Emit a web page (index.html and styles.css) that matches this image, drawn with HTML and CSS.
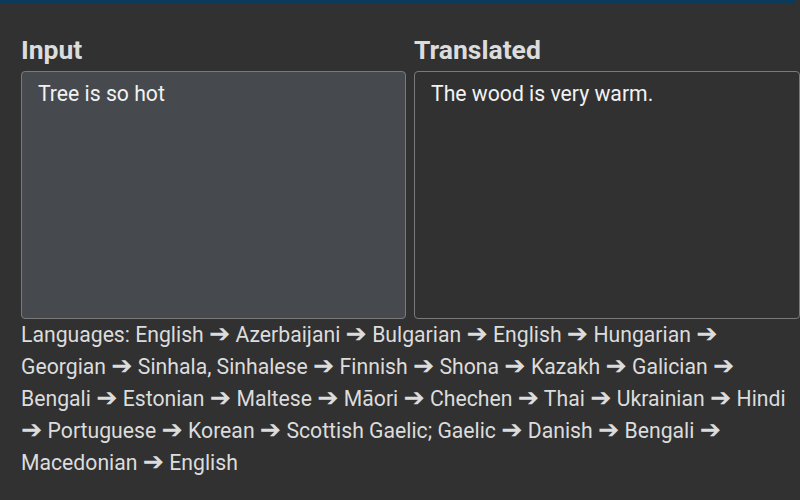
FILE: index.html
```
<!DOCTYPE html>
<html>
<head>
    <title>Translate</title>
    <link rel="stylesheet" href="styles.css">
</head>
<body>

    <div class="top-bar"></div>

    <div class="main">
        <div class="columns">
            <div class="column">
                <h2 class="label">Input</h2>
                <textarea class="box input-box">Tree is so hot</textarea>
            </div>
            <div class="column">
                <h2 class="label">Translated</h2>
                <textarea class="box output-box" readonly>The wood is very warm.</textarea>
            </div>
        </div>

        <p class="languages">Languages: English <span class="arrow">➔</span> Azerbaijani <span class="arrow">➔</span> Bulgarian <span class="arrow">➔</span> English <span class="arrow">➔</span> Hungarian <span class="arrow">➔</span> Georgian <span class="arrow">➔</span> Sinhala, Sinhalese <span class="arrow">➔</span> Finnish <span class="arrow">➔</span> Shona <span class="arrow">➔</span> Kazakh <span class="arrow">➔</span> Galician <span class="arrow">➔</span> Bengali <span class="arrow">➔</span> Estonian <span class="arrow">➔</span> Maltese <span class="arrow">➔</span> Māori <span class="arrow">➔</span> Chechen <span class="arrow">➔</span> Thai <span class="arrow">➔</span> Ukrainian <span class="arrow">➔</span> Hindi <span class="arrow">➔</span> Portuguese <span class="arrow">➔</span> Korean <span class="arrow">➔</span> Scottish Gaelic; Gaelic <span class="arrow">➔</span> Danish <span class="arrow">➔</span> Bengali <span class="arrow">➔</span> Macedonian <span class="arrow">➔</span> English</p>
    </div>

</body>
</html>
```

FILE: styles.css
```
body {
    font-family: Roboto, "Noto Sans", sans-serif;
    margin: 0;
    padding: 0;
    background-color: #313131;
    color: #dcdcdc;
    overflow: hidden;
    height: 100vh;
}

.top-bar {
    height: 4px;
    width: 795px;
    background-color: #0b3a5b;
}

.main {
    padding-left: 21px;
    width: 779px;
}

.columns {
    display: grid;
    grid-template-columns: 385px 386px;
    column-gap: 8px;
}

.label {
    font-size: 26.5px;
    font-weight: bold;
    margin: 0;
    padding-top: 30px;
    line-height: 32px;
    margin-bottom: 5px;
    color: #dcdcdc;
}

.box {
    display: block;
    box-sizing: border-box;
    width: 100%;
    height: 248px;
    margin: 0;
    padding: 9px 16px;
    border: 1px solid #7a7a7a;
    border-radius: 4px;
    font-family: Roboto, "Noto Sans", sans-serif;
    font-size: 21.2px;
    line-height: 26px;
    color: #f2f2f2;
    resize: none;
    outline: none;
}

.input-box {
    background-color: #464a4e;
}

.output-box {
    background-color: #313131;
}

.languages {
    margin: 0;
    font-size: 21.2px;
    line-height: 32px;
    color: #dcdcdc;
}

.arrow {
    font-family: "DejaVu Sans", sans-serif;
    font-size: 1.2em;
    line-height: 0;
}
```
